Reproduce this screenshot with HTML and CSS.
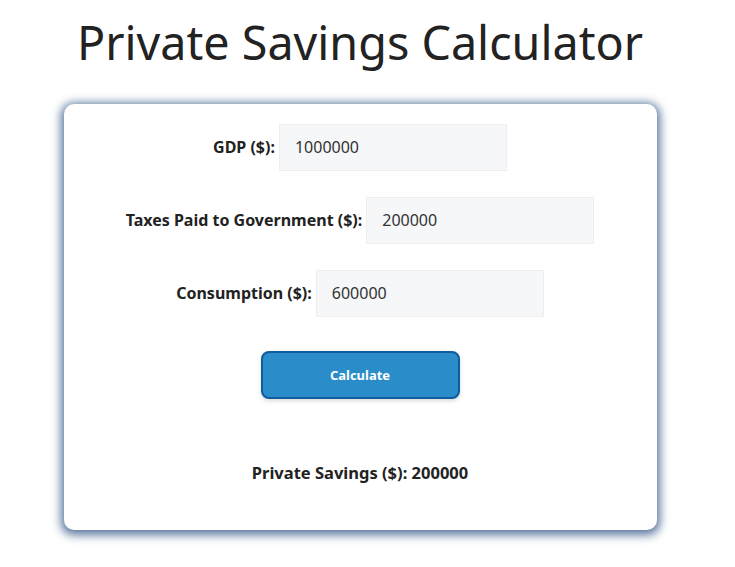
FILE: index.html
```html
<!DOCTYPE html>
<html lang="en">
<head>
    <meta charset="UTF-8">
    <meta name="viewport" content="width=device-width, initial-scale=1.0">
    <title>Private Savings Calculator</title>
    <link rel="stylesheet" href="styles.css">
</head>
<body>
    <div class="page">
        <h1>Private Savings Calculator</h1>
        <div class="calculator">
            <div class="field">
                <label for="gdp">GDP ($):</label>
                <input type="number" id="gdp" value="1000000">
            </div>
            <div class="field">
                <label for="taxes">Taxes Paid to Government ($):</label>
                <input type="number" id="taxes" value="200000">
            </div>
            <div class="field">
                <label for="consumption">Consumption ($):</label>
                <input type="number" id="consumption" value="600000">
            </div>
            <button class="calc-btn" onclick="calculate()">Calculate</button>
            <p class="result" id="result">Private Savings ($): 200000</p>
        </div>
    </div>

    <script>
        function calculate() {
            const gdp = parseFloat(document.getElementById('gdp').value) || 0;
            const taxes = parseFloat(document.getElementById('taxes').value) || 0;
            const consumption = parseFloat(document.getElementById('consumption').value) || 0;
            const savings = gdp - taxes - consumption;
            document.getElementById('result').textContent = 'Private Savings ($): ' + savings;
        }
    </script>
</body>
</html>
```

FILE: styles.css
```css
body {
    margin: 0;
    background-color: #fff;
    color: #222;
    font-family: 'Noto Sans', 'Open Sans', Arial, sans-serif;
}

.page {
    width: 720px;
    padding-bottom: 30px;
    display: flex;
    flex-direction: column;
    align-items: center;
}

h1 {
    font-weight: 400;
    font-size: 46.7px;
    line-height: 1;
    margin: 19px 0 38px;
    color: #222;
}

.calculator {
    width: 593px;
    height: 426px;
    box-sizing: border-box;
    background-color: #fff;
    border-radius: 10px;
    box-shadow: 0 2px 10px 3px rgba(60, 95, 140, 0.85);
    padding: 20px 0 0;
    display: flex;
    flex-direction: column;
    align-items: center;
}

.field {
    display: flex;
    align-items: center;
    gap: 4px;
    margin-bottom: 26px;
}

.field label {
    font-weight: 700;
    font-size: 16px;
    color: #222;
}

.field input {
    width: 228px;
    height: 47px;
    box-sizing: border-box;
    padding: 0 15px;
    background-color: #f6f7f9;
    border: 1px solid #eceef0;
    font-family: inherit;
    font-size: 16px;
    color: #333;
    outline: none;
    -moz-appearance: textfield;
}

.field input::-webkit-outer-spin-button,
.field input::-webkit-inner-spin-button {
    -webkit-appearance: none;
    margin: 0;
}

.calc-btn {
    margin-top: 8px;
    width: 199px;
    height: 48px;
    background-color: #2a8cc8;
    border: 2px solid #0e5b9e;
    border-radius: 8px;
    color: #fff;
    font-family: inherit;
    font-weight: 700;
    font-size: 13px;
    cursor: pointer;
    box-shadow: 0 2px 4px rgba(0, 0, 0, 0.15);
}

.calc-btn:hover {
    background-color: #2380ba;
}

.result {
    margin: 62px 0 0;
    font-weight: 700;
    font-size: 16.5px;
    color: #222;
}
```
